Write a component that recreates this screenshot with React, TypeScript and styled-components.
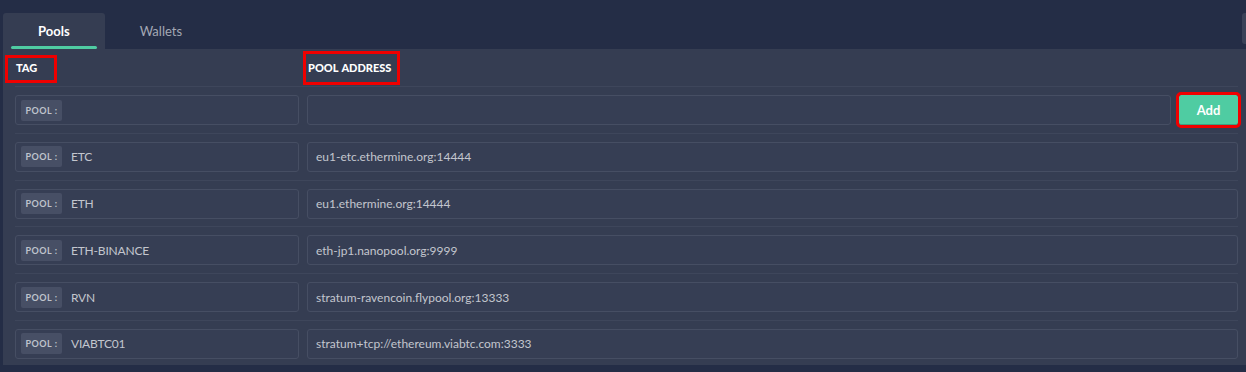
import styled, { createGlobalStyle } from "styled-components";

const GlobalStyle = createGlobalStyle`
  html, body {
    margin: 0;
    padding: 0;
    background: #242d46;
    font-family: Lato, "Open Sans", sans-serif;
    overflow: hidden;
  }
`

const Page = styled.div`
  width: 1246px;
  height: 372px;
  padding-left: 3px;
  box-sizing: border-box;
  background: #242d46;
`

const TabBar = styled.div`
  display: flex;
  align-items: flex-start;
  height: 49px;
  padding-top: 13px;
  box-sizing: border-box;
`

const Tab = styled.div<{ $active?: boolean }>`
  position: relative;
  height: 36px;
  padding: 0 35px;
  display: flex;
  align-items: center;
  font-size: 13px;
  font-weight: ${(p) => (p.$active ? 700 : 400)};
  color: ${(p) => (p.$active ? "#ffffff" : "#a3a8b4")};
  background: ${(p) => (p.$active ? "#353d52" : "transparent")};
  border-radius: 3px 3px 0 0;
  box-sizing: border-box;

  &::after {
    content: "";
    display: ${(p) => (p.$active ? "block" : "none")};
    position: absolute;
    left: 8px;
    right: 8px;
    bottom: 0;
    height: 3px;
    border-radius: 2px;
    background: #4fcca2;
  }
`

const EdgeButton = styled.div`
  margin-left: auto;
  width: 4px;
  height: 31px;
  border-radius: 3px 0 0 3px;
  background: #3a4258;
`

const Panel = styled.div`
  background: #353d52;
  height: 316px;
  padding: 0 8px 0 12px;
  box-sizing: border-box;
`

const HeaderRow = styled.div`
  display: grid;
  grid-template-columns: 284px 1fr;
  column-gap: 8px;
  height: 38px;
  align-items: center;
  border-bottom: 1px solid #3e465b;
  box-sizing: border-box;
`

const HeaderLabel = styled.span<{ $box: [number, number, number, number] }>`
  position: relative;
  justify-self: start;
  margin-left: 1px;
  font-size: 11px;
  line-height: 13px;
  font-weight: 900;
  color: #ffffff;
  word-spacing: 1px;

  &::after {
    content: "";
    position: absolute;
    left: ${(p) => p.$box[0]}px;
    top: ${(p) => p.$box[1]}px;
    width: ${(p) => p.$box[2]}px;
    height: ${(p) => p.$box[3]}px;
    border: 3px solid #f00000;
    box-sizing: border-box;
  }
`

const Row = styled.div<{ $withButton?: boolean }>`
  display: grid;
  grid-template-columns: ${(p) => (p.$withButton ? "284px 1fr 59px" : "284px 1fr")};
  column-gap: 8px;
  padding: 8px 0 7.75px;
  border-bottom: 1px solid #3e465b;
  align-items: center;

  &:last-child {
    border-bottom: none;
  }
`

const Field = styled.div`
  height: 30px;
  display: flex;
  align-items: center;
  gap: 9px;
  padding: 0 8px 0 5px;
  border: 1px solid #464e63;
  border-radius: 3px;
  background: #363e54;
  box-sizing: border-box;
  font-size: 12px;
  letter-spacing: -0.2px;
  color: #c3c6ce;
  white-space: nowrap;
`

const AddressField = styled(Field)`
  padding-left: 8px;
  letter-spacing: 0;
`

const Badge = styled.span`
  width: 41px;
  height: 21px;
  display: flex;
  align-items: center;
  justify-content: center;
  border-radius: 2px;
  background: #474f65;
  color: #bfc3cc;
  font-size: 9px;
  font-weight: 700;
  letter-spacing: 0.5px;
  white-space: pre;
`

const AddButton = styled.button`
  height: 30px;
  border: none;
  border-radius: 2px;
  background: #4fcca2;
  color: #ffffff;
  font-family: Lato, sans-serif;
  font-size: 13px;
  font-weight: 700;
  outline: 3px solid #f00000;
  box-shadow: inset 0 -1px 0 #3f9f80;
  cursor: pointer;
`

const pools = [
  { tag: "ETC", address: "eu1-etc.ethermine.org:14444" },
  { tag: "ETH", address: "eu1.ethermine.org:14444" },
  { tag: "ETH-BINANCE", address: "eth-jp1.nanopool.org:9999" },
  { tag: "RVN", address: "stratum-ravencoin.flypool.org:13333" },
  { tag: "VIABTC01", address: "stratum+tcp://ethereum.viabtc.com:3333" },
]

export default function App() {
  return (
    <>
      <GlobalStyle />
      <Page>
        <TabBar>
          <Tab $active>Pools</Tab>
          <Tab>Wallets</Tab>
          <EdgeButton />
        </TabBar>
        <Panel>
          <HeaderRow>
            <HeaderLabel $box={[-11, -6, 52, 28]}>TAG</HeaderLabel>
            <HeaderLabel $box={[-5, -10, 97, 34]}>POOL ADDRESS</HeaderLabel>
          </HeaderRow>
          <Row $withButton>
            <Field>
              <Badge>POOL :</Badge>
            </Field>
            <AddressField />
            <AddButton>Add</AddButton>
          </Row>
          {pools.map((p) => (
            <Row key={p.tag}>
              <Field>
                <Badge>POOL :</Badge>
                {p.tag}
              </Field>
              <AddressField>{p.address}</AddressField>
            </Row>
          ))}
        </Panel>
      </Page>
    </>
  )
}
